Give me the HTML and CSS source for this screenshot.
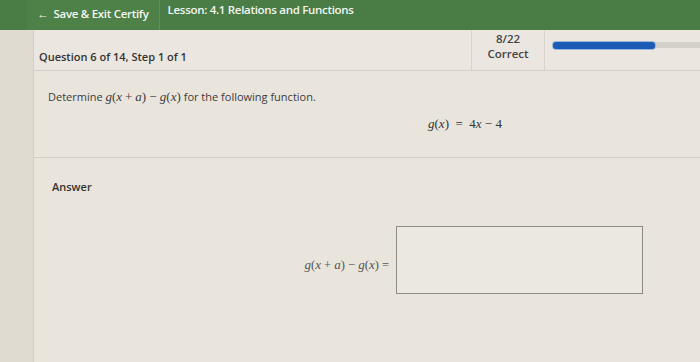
FILE: index.html
```html
<!DOCTYPE html>
<html lang="en">
<head>
    <meta charset="UTF-8">
    <meta name="viewport" content="width=device-width, initial-scale=1.0">
    <title>Question 6 of 14</title>
    <link rel="stylesheet" href="styles.css">
</head>
<body>
    <div class="topbar">
        <div class="exit">&larr;&nbsp; Save &amp; Exit Certify</div>
        <div class="lesson">Lesson: 4.1 Relations and Functions</div>
    </div>
    <div class="page">
        <div class="side"></div>
        <div class="panel">
            <div class="qbar">
                <div class="qtitle">Question 6 of 14, Step 1 of 1</div>
                <div class="score">8/22<br>Correct</div>
                <div class="progress"><div class="fill"></div></div>
            </div>
            <div class="problem">
                <p class="prompt">Determine <span class="m">g</span><span class="r">(</span><span class="m">x</span> <span class="r">+</span> <span class="m">a</span><span class="r">) &minus; </span><span class="m">g</span><span class="r">(</span><span class="m">x</span><span class="r">)</span> for the following function.</p>
                <p class="given"><span class="m">g</span>(<span class="m">x</span>) &nbsp;=&nbsp; 4<span class="m">x</span> &minus; 4</p>
            </div>
            <div class="answer">
                <div class="alabel">Answer</div>
                <div class="arow">
                    <span class="expr"><span class="m">g</span>(<span class="m">x</span> + <span class="m">a</span>) &minus; <span class="m">g</span>(<span class="m">x</span>) =</span>
                    <div class="box"></div>
                </div>
            </div>
        </div>
    </div>
</body>
</html>
```

FILE: styles.css
```css
html,body,div,span,p{margin:0; padding:0;}
body{width:700px; height:362px; overflow:hidden; background:#e9e5dd; font-family:"Open Sans", "Liberation Sans", sans-serif; color:#3a3a3a;}

.topbar{display:flex; height:30px; background:#4a7c45; color:#f3f6f1; font-size:11.5px; font-weight:600;}
.exit{margin-left:27px; padding:0 10px 0 10px; height:30px; line-height:27px; background:#4e8148; border-right:1px solid #5f8f59; letter-spacing:-0.3px;}
.lesson{padding-left:8px; line-height:20px; letter-spacing:-0.3px;}

.page{display:flex; height:332px;}
.side{width:33px; background:#dfdbd1; border-right:1px solid #d2cec4;}
.panel{flex:1;}

.qbar{display:flex; height:40px; background:#ebe7e0; border-bottom:1px solid #d5d1c8;}
.qtitle{flex:1; padding:19px 0 0 5px; font-size:11px; font-weight:600; color:#333;}
.score{width:72px; border-left:1px solid #d8d4cb; border-right:1px solid #d8d4cb; text-align:center; font-size:11.5px; line-height:15px; padding-top:1px; color:#444; font-weight:600;}
.progress{width:147px; margin:12px 0 0 8px; height:6px; background:#d3d0c9;}
.fill{width:102px; height:7px; background:#1d5cb6; border-radius:3px; box-shadow:0 0 0 1px #9db7dc;}

.problem{height:87px; border-bottom:1px solid #d3cfc6; padding:18px 0 0 14px; box-sizing:border-box;}
.prompt{font-size:11px; color:#3c3c3c;}
.m{font-family:"Liberation Serif", serif; font-style:italic; font-size:13px;}
.r{font-family:"Liberation Serif", serif; font-size:13px;}
.given{margin:11px 0 0 380px; font-family:"Liberation Serif", serif; font-size:13px; color:#333;}

.answer{padding:21px 0 0 18px;}
.alabel{font-size:11px; font-weight:600; color:#333;}
.arow{display:flex; align-items:center; margin-top:32px;}
.expr{width:337px; text-align:right; font-family:"Liberation Serif", serif; font-size:12.5px; color:#555; margin-top:10px;}
.box{width:245px; height:66px; margin-left:7px; border:1px solid #8e8b85; background:#ebe8e1;}
```
